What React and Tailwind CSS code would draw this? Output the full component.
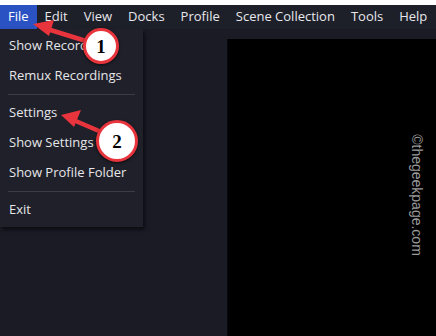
import React from 'react';

const menus = ['File', 'Edit', 'View', 'Docks', 'Profile', 'Scene Collection', 'Tools', 'Help'];

const fileItems = [
  { label: 'Show Recordings' },
  { label: 'Remux Recordings' },
  { sep: true },
  { label: 'Settings' },
  { label: 'Show Settings' },
  { label: 'Show Profile Folder' },
  { sep: true },
  { label: 'Exit' },
];

function Badge({ n, x, y, r }) {
  return (
    <div
      className="absolute flex items-center justify-center rounded-full border-[3px] border-[#e8343c] bg-white shadow-[0_1px_3px_rgba(0,0,0,0.6)]"
      style={{ left: x - r, top: y - r, width: r * 2, height: r * 2 }}
    >
      <span className="text-[19px] font-bold leading-none text-black" style={{ fontFamily: '"Liberation Serif", serif' }}>
        {n}
      </span>
    </div>
  );
}

export default function App() {
  return (
    <div className="relative h-[336px] w-[436px] overflow-hidden bg-[#1a1b25]" style={{ fontFamily: '"Open Sans", sans-serif' }}>
      <div className="h-[5px] bg-white" />

      {/* menu bar */}
      <div className="flex h-6 items-center bg-[#1d1f29] text-[13px] text-[#e8e8ec]">
        {menus.map((m, i) => (
          <div key={m} className={`flex h-full items-center px-2 ${i === 0 ? 'bg-[#2b52c2] text-white' : ''}`}>
            {m}
          </div>
        ))}
      </div>

      {/* body */}
      <div className="flex h-[307px]">
        <div className="w-[227px]" />
        <div className="mt-[10px] flex-1 border-l border-[#07070d] bg-black" />
      </div>

      {/* file dropdown */}
      <div className="absolute left-0 top-[29px] w-[143px] bg-[#1f2029] py-[2px] text-[13px] text-[#e6e6ea] shadow-[2px_3px_4px_rgba(0,0,0,0.55)]">
        {fileItems.map((it, i) =>
          it.sep ? (
            <div key={i} className="flex h-[7px] items-center px-2">
              <div className="h-px w-full bg-[#3a3c47]" />
            </div>
          ) : (
            <div key={i} className="flex h-[30px] items-center px-[9px]">
              {it.label}
            </div>
          )
        )}
      </div>

      {/* watermark */}
      <div
        className="absolute left-[347px] top-[188px] w-[140px] rotate-90 text-center text-[14px] leading-none text-[#9a9a9a]"
        style={{ fontFamily: '"Liberation Sans", sans-serif' }}
      >
        ©thegeekpage.com
      </div>

      {/* annotations */}
      <svg className="absolute left-0 top-0" width="436" height="336">
        <line x1="86" y1="41" x2="44" y2="28" stroke="#e8343c" strokeWidth="4.5" strokeLinecap="round" />
        <polygon points="33,24 54,20 49,36" fill="#e8343c" />
        <line x1="99" y1="131" x2="71" y2="119" stroke="#e8343c" strokeWidth="4.5" strokeLinecap="round" />
        <polygon points="61,115 81,110 74,127" fill="#e8343c" />
      </svg>
      <Badge n="1" x={101} y={46} r={18} />
      <Badge n="2" x={117} y={141} r={21} />
    </div>
  );
}
